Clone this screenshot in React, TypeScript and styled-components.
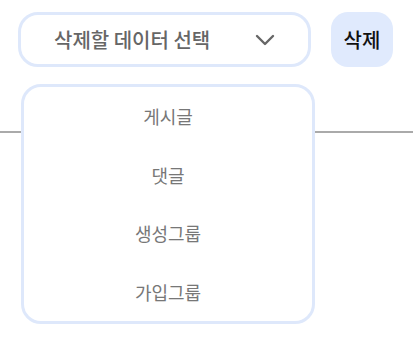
import styled, { createGlobalStyle } from "styled-components"
import { useState } from "react"

const GlobalStyle = createGlobalStyle`
	body {
		margin: 0;
		background: #ffffff;
		font-family: "Noto Sans CJK KR", "Noto Sans", sans-serif;
	}
`

const BORDER = "#dee8fb"

const Page = styled.div`
	position: relative;
	width: 413px;
	height: 348px;
	overflow: hidden;
`

const Header = styled.div`
	display: flex;
	align-items: center;
	gap: 20px;
	padding: 12px 0 0 18px;
`

const SelectBox = styled.button`
	display: flex;
	align-items: center;
	justify-content: space-between;
	box-sizing: border-box;
	width: 293px;
	height: 55px;
	padding: 0 33px 0 33px;
	border: 3px solid ${BORDER};
	border-radius: 20px;
	background: #ffffff;
	font-family: inherit;
	font-size: 20px;
	font-weight: 500;
	color: #666666;
	cursor: pointer;
`

const DeleteButton = styled.button`
	box-sizing: border-box;
	width: 62px;
	height: 55px;
	padding: 0;
	border: none;
	border-radius: 17px;
	background: #e0eafd;
	font-family: inherit;
	font-size: 20px;
	font-weight: 500;
	color: #111111;
	cursor: pointer;
`

const Divider = styled.hr`
	margin: 64px 0 0;
	border: none;
	height: 2px;
	background: #aaaaaa;
`

const Menu = styled.ul`
	position: absolute;
	top: 84px;
	left: 21px;
	box-sizing: border-box;
	width: 294px;
	margin: 0;
	padding: 0;
	list-style: none;
	border: 3px solid ${BORDER};
	border-radius: 20px;
	background: #ffffff;
`

const MenuItem = styled.li`
	display: flex;
	align-items: center;
	justify-content: center;
	height: 58.5px;
	font-size: 18px;
	color: #777777;
	cursor: pointer;
`

const Chevron = () => (
	<svg width='20' height='12' viewBox='0 0 20 12' fill='none'>
		<path d='M2 2 L10 10 L18 2' stroke='#666' strokeWidth='2.4' strokeLinecap='round' strokeLinejoin='round' />
	</svg>
)

const options = ["게시글", "댓글", "생성그룹", "가입그룹"]

const App = () => {
	const [open, setOpen] = useState(true)
	return (
		<Page>
			<GlobalStyle />
			<Header>
				<SelectBox onClick={() => setOpen(!open)}>
					<span>삭제할 데이터 선택</span>
					<Chevron />
				</SelectBox>
				<DeleteButton>삭제</DeleteButton>
			</Header>
			<Divider />
			{open && (
				<Menu>
					{options.map((o) => (
						<MenuItem key={o} onClick={() => setOpen(false)}>
							{o}
						</MenuItem>
					))}
				</Menu>
			)}
		</Page>
	)
}

export default App
